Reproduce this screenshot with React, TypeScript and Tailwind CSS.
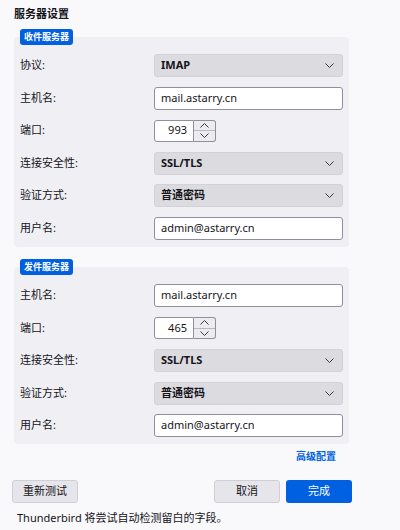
const font = "font-['Noto_Sans','Noto_Sans_CJK_SC',sans-serif]";

const Chevron = ({ up = false }: { up?: boolean }) => (
  <svg width="9" height="5" viewBox="0 0 9 5" fill="none" className={up ? "rotate-180" : ""}>
    <path d="M0.5 0.5L4.5 4.5L8.5 0.5" stroke="#3a3944" strokeWidth="1" />
  </svg>
);

const Row = ({ label, children }: { label: string; children: React.ReactNode }) => (
  <div className="flex items-center h-[23px]">
    <div className="w-[134px] text-[11px] text-[#15141a]">{label}</div>
    <div className="flex-1">{children}</div>
  </div>
);

const Select = ({ value }: { value: string }) => (
  <div className="h-[23px] flex items-center justify-between rounded-[3px] bg-[#dcdce0] border border-[#d2d2d8] pl-[6px] pr-[8px] text-[11px] font-bold text-[#15141a]">
    <span>{value}</span>
    <Chevron />
  </div>
);

const Input = ({ value }: { value: string }) => (
  <div className="h-[23px] flex items-center rounded-[3px] bg-white border border-[#8f8f9d] px-[6px] text-[11px] text-[#15141a]">
    {value}
  </div>
);

const Spinner = ({ value }: { value: string }) => (
  <div className="flex h-[22px] w-[62px]">
    <div className="w-[40px] flex items-center justify-end pr-[6px] bg-white border border-[#8f8f9d] rounded-l-[3px] text-[11px] text-[#15141a]">
      {value}
    </div>
    <div className="w-[22px] flex flex-col border border-l-0 border-[#8f8f9d] rounded-r-[3px] bg-[#ececf0]">
      <div className="flex-1 flex items-center justify-center border-b border-[#b8b8c0]">
        <Chevron up />
      </div>
      <div className="flex-1 flex items-center justify-center">
        <Chevron />
      </div>
    </div>
  </div>
);

const Badge = ({ text }: { text: string }) => (
  <div className="relative z-10 ml-[6px] -mb-[8px] self-start h-[16px] flex items-center px-[4px] rounded-[3px] bg-[#0060df] text-white text-[9px] font-bold">
    {text}
  </div>
);

const Panel = ({ children }: { children: React.ReactNode }) => (
  <div className="bg-[#f0f0f4] rounded-[4px] pt-[17px] pb-[7px] pl-[6px] pr-[6px] flex flex-col gap-[9.5px]">
    {children}
  </div>
);

export default function App() {
  return (
    <div className={`${font} w-[400px] h-[530px] bg-[#f9f9fb] text-[#15141a] px-[14px] pt-[6px] flex flex-col`}>
      <div className="text-[11px] font-bold h-[16px] leading-[16px]">服务器设置</div>

      <div className="flex flex-col mt-[7px] w-[335px]">
        <Badge text="收件服务器" />
        <Panel>
          <Row label="协议:"><Select value="IMAP" /></Row>
          <Row label="主机名:"><Input value="mail.astarry.cn" /></Row>
          <Row label="端口:"><Spinner value="993" /></Row>
          <Row label="连接安全性:"><Select value="SSL/TLS" /></Row>
          <Row label="验证方式:"><Select value="普通密码" /></Row>
          <Row label="用户名:"><Input value="admin@astarry.cn" /></Row>
        </Panel>
      </div>

      <div className="flex flex-col mt-[12.5px] w-[335px]">
        <Badge text="发件服务器" />
        <Panel>
          <Row label="主机名:"><Input value="mail.astarry.cn" /></Row>
          <Row label="端口:"><Spinner value="465" /></Row>
          <Row label="连接安全性:"><Select value="SSL/TLS" /></Row>
          <Row label="验证方式:"><Select value="普通密码" /></Row>
          <Row label="用户名:"><Input value="admin@astarry.cn" /></Row>
        </Panel>
      </div>

      <div className="w-[322px] flex justify-end mt-[5px]">
        <span className="text-[10px] font-bold text-[#0061e0]">高级配置</span>
      </div>

      <div className="flex items-center mt-[16px] w-[340px] -ml-[2px]">
        <button className="h-[23px] w-[66px] rounded-[3px] bg-[#e5e5ea] border border-[#cfcfd8] text-[11px]">重新测试</button>
        <div className="flex-1" />
        <button className="h-[23px] w-[66px] rounded-[3px] bg-[#e5e5ea] border border-[#cfcfd8] text-[11px]">取消</button>
        <button className="ml-[6px] h-[23px] w-[66px] rounded-[3px] bg-[#0061e0] text-white text-[11px]">完成</button>
      </div>

      <div className="mt-[7px] ml-[3px] text-[11px]">Thunderbird 将尝试自动检测留白的字段。</div>
    </div>
  );
}
